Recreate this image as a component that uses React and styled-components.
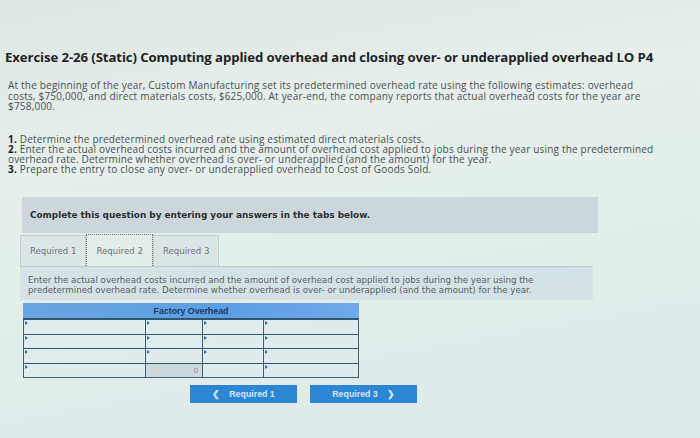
import React from "react";
import styled, { createGlobalStyle } from "styled-components";

const GlobalStyle = createGlobalStyle`
  html, body {
    margin: 0;
    padding: 0;
  }
  body {
    width: 700px;
    height: 438px;
    overflow: hidden;
    background: linear-gradient(170deg, #dde6e3 0%, #e6efeb 30%, #e3eeea 60%, #dde9ea 100%);
    font-family: "Open Sans", "Liberation Sans", sans-serif;
    color: #2a2f33;
  }
`;

const Page = styled.div`
  width: 700px;
  height: 438px;
  padding: 49px 0 0 5px;
  box-sizing: border-box;
`;

const Title = styled.h1`
  margin: 0;
  font-family: "Open Sans", sans-serif;
  font-size: 13.2px;
  font-weight: 700;
  line-height: 16px;
  color: #1e2326;
  letter-spacing: -0.1px;
  white-space: nowrap;
`;

const Intro = styled.p`
  margin: 15px 0 0 3px;
  font-size: 10px;
  line-height: 10.5px;
  color: #4a5055;
  letter-spacing: 0.2px;
  white-space: nowrap;
`;

const Steps = styled.ol`
  list-style: none;
  margin: 22px 0 0 3px;
  padding: 0;
  font-size: 10px;
  line-height: 10.2px;
  color: #4a5055;
  letter-spacing: 0.18px;
  white-space: nowrap;
`;

const Step = styled.li`
  b {
    color: #1e2326;
    font-weight: 700;
  }
`;

const Prompt = styled.div`
  margin: 23px 0 0 17px;
  width: 576px;
  height: 36px;
  background: #cdd7db;
  display: flex;
  align-items: center;
  padding-left: 8px;
  box-sizing: border-box;
  font-family: "DejaVu Sans", sans-serif;
  font-size: 8.9px;
  font-weight: 700;
  color: #2c3034;
`;

const Tabs = styled.div`
  display: flex;
  margin: 0 0 0 15px;
  height: 33px;
  align-items: flex-end;
`;

const Tab = styled.div`
  padding: 0 9px;
  display: flex;
  align-items: center;
  font-family: "DejaVu Sans", sans-serif;
  font-size: 8.6px;
  color: #707478;
  background: ${(p) => (p.$active ? "rgba(226, 234, 236, 0.4)" : "rgba(214, 222, 226, 0.55)")};
  border: 1px ${(p) => (p.$active ? "dotted #6b6f72" : "solid #c4cdd1")};
  border-bottom: none;
  height: ${(p) => (p.$active ? 31 : 30)}px;
`;

const Panel = styled.div`
  margin: 0 0 0 15px;
  width: 573px;
  padding: 8px 8px 5px;
  box-sizing: border-box;
  background: rgba(206, 219, 226, 0.65);
  border-top: 1px solid #c1cbd0;
  font-family: "DejaVu Sans", sans-serif;
  font-size: 8.7px;
  line-height: 10px;
  color: #5b6065;
  white-space: nowrap;
`;

const Table = styled.div`
  margin: 3px 0 0 18px;
  width: 336px;
`;

const Header = styled.div`
  height: 15px;
  background: linear-gradient(90deg, #6aa6e0 0%, #5b9ee2 60%, #71aaea 100%);
  display: flex;
  align-items: center;
  justify-content: center;
  font-family: "Liberation Sans", Arial, sans-serif;
  font-size: 8.8px;
  font-weight: 700;
  color: #173a63;
`;

const Grid = styled.div`
  display: grid;
  grid-template-columns: 122px 57px 61px 94px;
  border: 1px solid #3b6178;
  border-top: 2px solid #2f5870;
`;

const Cell = styled.div`
  position: relative;
  height: 13.5px;
  border-right: ${(p) => (p.$last ? "none" : "1px solid #3b6178")};
  border-bottom: ${(p) => (p.$bottom ? "none" : "1.5px solid #2f5870")};
  background: ${(p) => (p.$grey ? "rgba(200, 208, 214, 0.7)" : "rgba(225, 232, 240, 0.45)")};
  font-family: "Liberation Sans", Arial, sans-serif;
  font-size: 8px;
  color: #8a8f93;
  text-align: right;
  padding-right: 4px;
  line-height: 14px;
  &::before {
    content: "";
    position: absolute;
    left: 1px;
    top: 1px;
    display: ${(p) => (p.$flag ? "block" : "none")};
    border-top: 2px solid transparent;
    border-bottom: 2px solid transparent;
    border-left: 3px solid #3a6fa8;
  }
`;

const Nav = styled.div`
  display: flex;
  gap: 13px;
  margin: 7px 0 0 185px;
`;

const NavButton = styled.button`
  width: 107px;
  height: 18px;
  border: none;
  background: #2d86d3;
  color: #d4e8fb;
  font-family: "Liberation Sans", Arial, sans-serif;
  font-size: 8.8px;
  font-weight: 700;
  display: flex;
  align-items: center;
  justify-content: center;
  gap: 9px;
  padding: 0;
  span {
    font-size: 9px;
  }
`;

const rows = [
  [true, true, true, true],
  [true, true, true, true],
  [true, true, true, true],
  [true, false, false, true],
];

export default function App() {
  return (
    <>
      <GlobalStyle />
      <Page>
        <Title>
          Exercise 2-26 (Static) Computing applied overhead and closing over- or underapplied overhead LO P4
        </Title>
        <Intro>
          At the beginning of the year, Custom Manufacturing set its predetermined overhead rate using the following estimates: overhead
          <br />
          costs, $750,000, and direct materials costs, $625,000. At year-end, the company reports that actual overhead costs for the year are
          <br />
          $758,000.
        </Intro>
        <Steps>
          <Step>
            <b>1.</b> Determine the predetermined overhead rate using estimated direct materials costs.
          </Step>
          <Step>
            <b>2.</b> Enter the actual overhead costs incurred and the amount of overhead cost applied to jobs during the year using the predetermined
            <br />
            overhead rate. Determine whether overhead is over- or underapplied (and the amount) for the year.
          </Step>
          <Step>
            <b>3.</b> Prepare the entry to close any over- or underapplied overhead to Cost of Goods Sold.
          </Step>
        </Steps>
        <Prompt>Complete this question by entering your answers in the tabs below.</Prompt>
        <Tabs>
          <Tab>Required 1</Tab>
          <Tab $active>Required 2</Tab>
          <Tab>Required 3</Tab>
        </Tabs>
        <Panel>
          Enter the actual overhead costs incurred and the amount of overhead cost applied to jobs during the year using the
          <br />
          predetermined overhead rate. Determine whether overhead is over- or underapplied (and the amount) for the year.
        </Panel>
        <Table>
          <Header>Factory Overhead</Header>
          <Grid>
            {rows.map((row, r) =>
              row.map((flag, c) => (
                <Cell
                  key={`${r}-${c}`}
                  $flag={flag}
                  $last={c === 3}
                  $bottom={r === 3}
                  $grey={r === 3 && c === 1}
                >
                  {r === 3 && c === 1 ? "0" : ""}
                </Cell>
              ))
            )}
          </Grid>
        </Table>
        <Nav>
          <NavButton>
            <span>&#10094;</span> Required 1
          </NavButton>
          <NavButton>
            Required 3 <span>&#10095;</span>
          </NavButton>
        </Nav>
      </Page>
    </>
  );
}
